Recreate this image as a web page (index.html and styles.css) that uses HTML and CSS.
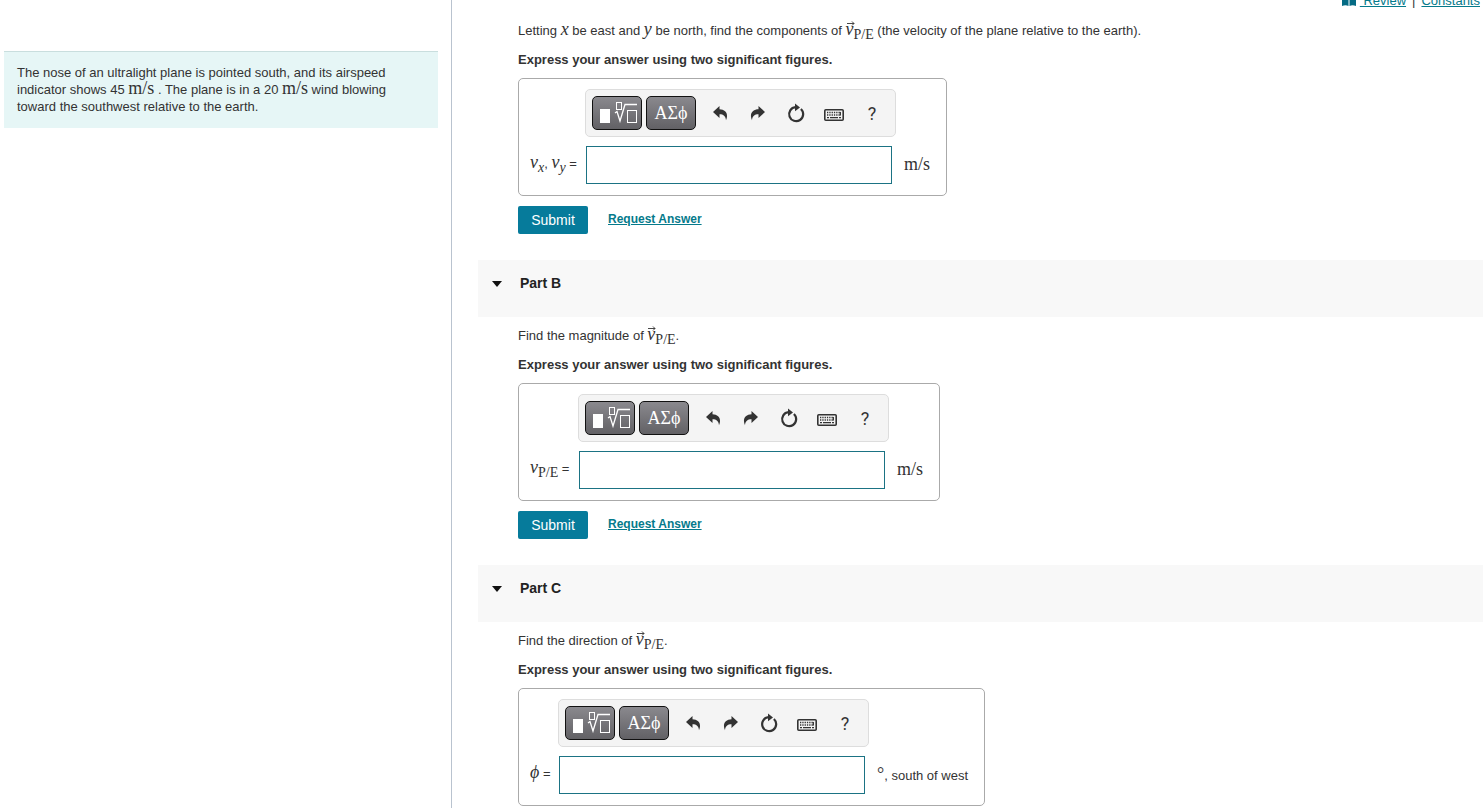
FILE: index.html
```html
<!DOCTYPE html>
<html lang="en">
<head>
  <meta charset="UTF-8">
  <meta name="viewport" content="width=device-width, initial-scale=1.0">
  <title>Relative Velocity</title>
  <link rel="stylesheet" href="styles.css">
</head>
<body>
  <!-- Shared icons -->
  <svg class="icon-defs" width="0" height="0" aria-hidden="true">
    <symbol id="icon-template" viewBox="0 0 40 24">
      <rect x="3" y="8" width="10" height="14" fill="#fff"/>
      <rect x="19.500" y="1.500" width="5" height="7" fill="none" stroke="#fff"/>
      <path d="M18 12l2-1.500 3 9.500 5-16.500h12" fill="none" stroke="#fff" stroke-width="1.300"/>
      <rect x="30.500" y="9.500" width="9" height="12" fill="none" stroke="#fff"/>
    </symbol>
    <symbol id="icon-undo" viewBox="0 0 24 24">
      <path d="M5 11l6.500-6v3.200c4.500 0 8 3 7.500 7.300-.1 1.500-.5 2.500-1 3.800-.3-4.300-3-6.100-6.500-6v3.700z"/>
    </symbol>
    <symbol id="icon-redo" viewBox="0 0 24 24">
      <path d="M19 11l-6.500-6v3.200c-4.500 0-8 3-7.500 7.300.1 1.500.5 2.500 1 3.800.3-4.300 3-6.100 6.500-6v3.700z"/>
    </symbol>
    <symbol id="icon-reset" viewBox="0 0 24 24">
      <path d="M16.900 8A7 7 0 1 1 11.500 6.200" fill="none" stroke="#333" stroke-width="2.200"/>
      <path d="M11 2.500l5 4-5 3.700z"/>
    </symbol>
    <symbol id="icon-keyboard" viewBox="0 0 24 24">
      <rect x="2.800" y="8.800" width="18.400" height="10.400" rx="1" fill="none" stroke="#333" stroke-width="1.600"/>
      <path d="M5 11.500h14M5 14h14" fill="none" stroke="#333" stroke-width="1.300" stroke-dasharray="1.300 1"/>
      <path d="M5 16.700h2M8 16.700h8M17 16.700h2M18.300 11v3.500" fill="none" stroke="#333" stroke-width="1.300"/>
    </symbol>
    <symbol id="icon-vector" viewBox="0 0 9 5">
      <path d="M1 2.500h7M6 .5l2 2-2 2" fill="none" stroke="#333" stroke-width="0.900"/>
    </symbol>
    <symbol id="icon-book" viewBox="0 0 14 12">
      <path d="M0 1.500q3.500-1.500 6.500 0V12q-3-1.500-6.500 0zM7.500 1.500q3-1.500 6.500 0V12q-3.500-1.500-6.500 0z"/>
    </symbol>
  </svg>

  <div class="page">
    <!-- Problem statement -->
    <aside class="sidebar">
      <p class="problem">The nose of an ultralight plane is pointed south, and its airspeed indicator shows 45 <span class="unit">m/s</span> . The plane is in a 20 <span class="unit">m/s</span> wind blowing toward the southwest relative to the earth.</p>
    </aside>

    <main class="content">
      <nav class="tools">
        <svg class="book" aria-hidden="true"><use href="#icon-book"/></svg>
        <a href="#review">&nbsp;Review</a>
        <span class="divider">|</span>
        <a href="#constants">Constants</a>
      </nav>

      <!-- Part A -->
      <section class="part">
        <p class="question">Letting <i class="math">x</i> be east and <i class="math">y</i> be north, find the components of <span class="math"><i class="vector">v<svg aria-hidden="true"><use href="#icon-vector"/></svg></i><span class="sub">P/E</span></span> (the velocity of the plane relative to the earth).</p>
        <p class="hint">Express your answer using two significant figures.</p>
        <form class="answer answer-a">
          <div class="toolbar">
            <button type="button" class="dark" aria-label="Templates"><svg class="template"><use href="#icon-template"/></svg></button>
            <button type="button" class="dark">ΑΣϕ</button>
            <div class="actions">
              <button type="button" aria-label="Undo"><svg><use href="#icon-undo"/></svg></button>
              <button type="button" aria-label="Redo"><svg><use href="#icon-redo"/></svg></button>
              <button type="button" aria-label="Reset"><svg><use href="#icon-reset"/></svg></button>
              <button type="button" aria-label="Keyboard shortcuts"><svg><use href="#icon-keyboard"/></svg></button>
              <button type="button">?</button>
            </div>
          </div>
          <label for="answerA"><i class="math">v<span class="sub">x</span></i>, <i class="math">v<span class="sub">y</span></i> =</label>
          <input type="text" id="answerA">
          <span class="after"><span class="unit">m/s</span></span>
        </form>
        <div class="submit-row">
          <button type="button" class="submit">Submit</button>
          <a href="#answer-a">Request Answer</a>
        </div>
      </section>

      <!-- Part B -->
      <h2 class="part-title"><span class="caret"></span>Part B</h2>
      <section class="part">
        <p class="question">Find the magnitude of <span class="math"><i class="vector">v<svg aria-hidden="true"><use href="#icon-vector"/></svg></i><span class="sub">P/E</span></span>.</p>
        <p class="hint">Express your answer using two significant figures.</p>
        <form class="answer answer-b">
          <div class="toolbar">
            <button type="button" class="dark" aria-label="Templates"><svg class="template"><use href="#icon-template"/></svg></button>
            <button type="button" class="dark">ΑΣϕ</button>
            <div class="actions">
              <button type="button" aria-label="Undo"><svg><use href="#icon-undo"/></svg></button>
              <button type="button" aria-label="Redo"><svg><use href="#icon-redo"/></svg></button>
              <button type="button" aria-label="Reset"><svg><use href="#icon-reset"/></svg></button>
              <button type="button" aria-label="Keyboard shortcuts"><svg><use href="#icon-keyboard"/></svg></button>
              <button type="button">?</button>
            </div>
          </div>
          <label for="answerB"><span class="math"><i>v</i><span class="sub">P/E</span></span> =</label>
          <input type="text" id="answerB">
          <span class="after"><span class="unit">m/s</span></span>
        </form>
        <div class="submit-row">
          <button type="button" class="submit">Submit</button>
          <a href="#answer-b">Request Answer</a>
        </div>
      </section>

      <!-- Part C -->
      <h2 class="part-title"><span class="caret"></span>Part C</h2>
      <section class="part">
        <p class="question">Find the direction of <span class="math"><i class="vector">v<svg aria-hidden="true"><use href="#icon-vector"/></svg></i><span class="sub">P/E</span></span>.</p>
        <p class="hint">Express your answer using two significant figures.</p>
        <form class="answer answer-c">
          <div class="toolbar">
            <button type="button" class="dark" aria-label="Templates"><svg class="template"><use href="#icon-template"/></svg></button>
            <button type="button" class="dark">ΑΣϕ</button>
            <div class="actions">
              <button type="button" aria-label="Undo"><svg><use href="#icon-undo"/></svg></button>
              <button type="button" aria-label="Redo"><svg><use href="#icon-redo"/></svg></button>
              <button type="button" aria-label="Reset"><svg><use href="#icon-reset"/></svg></button>
              <button type="button" aria-label="Keyboard shortcuts"><svg><use href="#icon-keyboard"/></svg></button>
              <button type="button">?</button>
            </div>
          </div>
          <label for="answerC"><i class="math">ϕ</i> =</label>
          <input type="text" id="answerC">
          <span class="after"><span class="unit">°</span>, south of west</span>
        </form>
      </section>
    </main>
  </div>
</body>
</html>
```
FILE: styles.css
```css
/* Global Styles */
* {
  box-sizing: border-box;
}

body {
  margin: 0;
  background-color: #fff;
  color: #333;
  font-family: "Liberation Sans", Arial, sans-serif;
  font-size: 13px;
  line-height: 17px;
}

p {
  margin: 0;
}

a {
  color: #057a8b;
}

.icon-defs {
  position: absolute;
}

.page {
  display: grid;
  grid-template-columns: 452px 1fr;
  min-height: 100vh;
}

/* Left column */
.sidebar {
  border-right: 1px solid #b9c3cf;
  padding: 51px 13px 0 4px;
}

.problem {
  background-color: #e6f6f6;
  border-top: 1px solid #c9dede;
  padding: 12px 40px 13px 13px;
}

/* Right column */
.content {
  padding-left: 26px;
  overflow: hidden;
}

.tools {
  display: flex;
  justify-content: flex-end;
  gap: 4px;
  height: 17px;
  margin-top: -8px;
  padding-right: 3px;
}

.tools .divider {
  padding: 0 2px;
}

.book {
  width: 14px;
  height: 12px;
  margin-top: 2px;
  fill: #056b84;
}

.part {
  padding: 10px 16px 0 40px;
}

.tools + .part {
  padding-top: 13px;
}

.hint {
  margin: 12px 0 10px;
  font-weight: bold;
}

/* Math text */
.math,
.unit {
  font-family: "Liberation Serif", "Times New Roman", serif;
  font-size: 18px;
  line-height: 0;
}

.sub {
  font-size: 14px;
  vertical-align: -4px;
}

.vector {
  position: relative;
}

.vector svg {
  position: absolute;
  left: 0;
  top: 2px;
  width: 9px;
  height: 5px;
}

/* Answer box */
.answer {
  display: grid;
  grid-template-rows: 48px 38px;
  row-gap: 9px;
  align-items: center;
  width: max-content;
  padding: 10px 16px 11px 11px;
  border: 1px solid #aaa;
  border-radius: 5px;
}

.answer-a {
  grid-template-columns: 55px 308px auto;
}

.answer-b {
  grid-template-columns: 48px 308px auto;
}

.answer-c {
  grid-template-columns: 28px 308px auto;
}

.answer label {
  padding-bottom: 4px;
  white-space: nowrap;
}

.answer input {
  width: 306px;
  height: 38px;
  margin: 0 1px;
  padding: 0 8px;
  border: 1px solid #1b7384;
  font-size: 16px;
}

.after {
  padding-left: 11px;
}

/* Toolbar over each input */
.toolbar {
  display: flex;
  gap: 4px;
  grid-column: 2 / 4;
  width: 311px;
  height: 48px;
  padding: 6px 3px 6px 6px;
  background-color: #f4f4f4;
  border: 1px solid #ddd;
  border-radius: 5px;
}

.toolbar button {
  width: 38px;
  height: 34px;
  padding: 0;
  border: none;
  background: none;
  color: #333;
  font-family: Roboto, "Liberation Sans", sans-serif;
  font-size: 18px;
  cursor: pointer;
}

.toolbar svg {
  display: block;
  width: 24px;
  height: 24px;
  margin: 0 auto;
  fill: #333;
}

.toolbar .dark {
  width: 50px;
  background: linear-gradient(#8a898e, #626165);
  border: 1px solid #111;
  border-radius: 5px;
  color: #fff;
  font-family: "Liberation Serif", "Times New Roman", serif;
}

.toolbar .template {
  width: 40px;
}

.actions {
  display: flex;
  margin-left: 1px;
}

/* Submit row */
.submit-row {
  display: flex;
  gap: 20px;
  padding: 10px 0 26px;
}

.submit {
  width: 70px;
  height: 28px;
  padding: 0;
  border: none;
  border-radius: 2px;
  background-color: #067b9b;
  color: #fff;
  font-family: inherit;
  font-size: 14px;
  cursor: pointer;
}

.submit-row a {
  padding-top: 5px;
  font-size: 12px;
  font-weight: bold;
}

/* Part heading */
.part-title {
  display: flex;
  align-items: center;
  gap: 18px;
  margin: 0;
  padding: 15px 14px 25px;
  background-color: #f8f8f8;
  color: #222;
  font-size: 14px;
  line-height: 17px;
}

.caret {
  border: 5px solid transparent;
  border-top: 6px solid #111;
  border-bottom: none;
}
```
